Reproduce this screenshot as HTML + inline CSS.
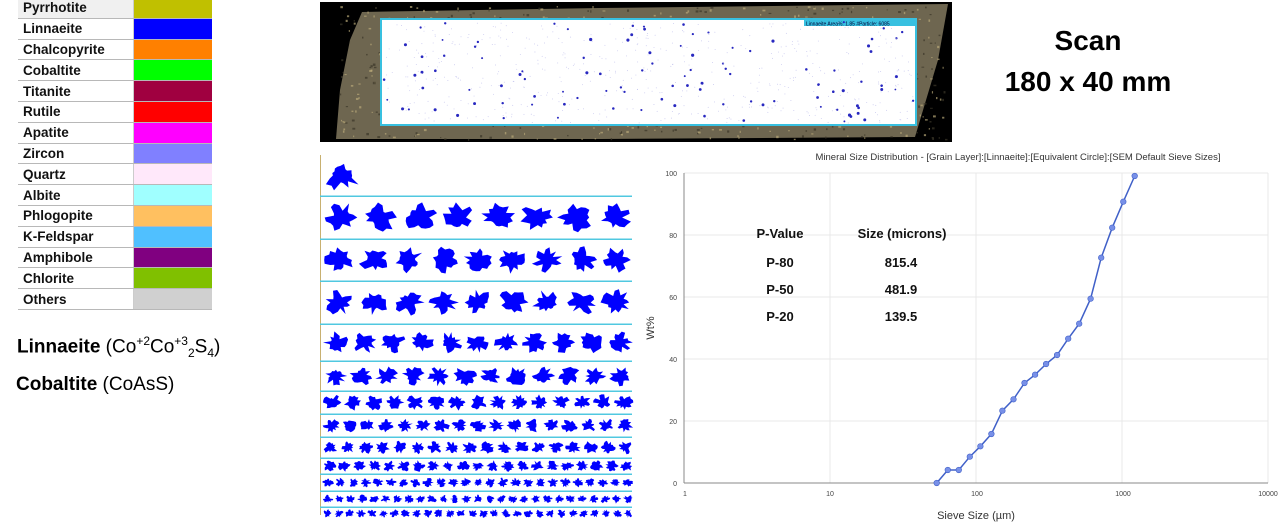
<!DOCTYPE html>
<html><head><meta charset="utf-8"><style>
body{margin:0;width:1280px;height:528px;background:#fff;overflow:hidden;position:relative;font-family:"Liberation Sans",Arial,sans-serif}
.leg{position:absolute;left:18px;top:-2px;border-collapse:collapse}
.leg td{height:19.8px;border-bottom:1px solid #b8b8b8;padding:0;font-weight:bold;font-size:13.5px;color:#111}
.leg td.n{width:110px;padding-left:5px;background:#fff}
.leg td.c{width:78px;border-left:1px solid #ccc}
.f{position:absolute;left:17px;font-size:19px;color:#000}
.f b{font-weight:bold}
.sc{position:absolute;left:990px;width:196px;text-align:center;font-weight:bold;font-size:28px;color:#000}
</style></head><body>
<table class="leg">
<tr><td class="n" style="background:#f0f0f0">Pyrrhotite</td><td class="c" style="background:#c0c000"></td></tr>
<tr><td class="n">Linnaeite</td><td class="c" style="background:#0000ff"></td></tr>
<tr><td class="n">Chalcopyrite</td><td class="c" style="background:#ff8000"></td></tr>
<tr><td class="n">Cobaltite</td><td class="c" style="background:#00ff00"></td></tr>
<tr><td class="n">Titanite</td><td class="c" style="background:#a00040"></td></tr>
<tr><td class="n">Rutile</td><td class="c" style="background:#ff0000"></td></tr>
<tr><td class="n">Apatite</td><td class="c" style="background:#ff00ff"></td></tr>
<tr><td class="n">Zircon</td><td class="c" style="background:#8080ff"></td></tr>
<tr><td class="n">Quartz</td><td class="c" style="background:#ffe8fa"></td></tr>
<tr><td class="n">Albite</td><td class="c" style="background:#a0ffff"></td></tr>
<tr><td class="n">Phlogopite</td><td class="c" style="background:#ffc060"></td></tr>
<tr><td class="n">K-Feldspar</td><td class="c" style="background:#50c0ff"></td></tr>
<tr><td class="n">Amphibole</td><td class="c" style="background:#800080"></td></tr>
<tr><td class="n">Chlorite</td><td class="c" style="background:#80c000"></td></tr>
<tr><td class="n">Others</td><td class="c" style="background:#d0d0d0"></td></tr>
</table>
<div class="f" style="top:334px"><b>Linnaeite</b> (Co<sup style="font-size:12px">+2</sup>Co<sup style="font-size:12px">+3</sup><sub style="font-size:12px">2</sub>S<sub style="font-size:12px">4</sub>)</div>
<div class="f" style="top:374px;left:16px"><b>Cobaltite</b> (CoAsS)</div>
<div class="sc" style="top:25px">Scan</div>
<div class="sc" style="top:66px">180 x 40 mm</div>

<svg style="position:absolute;left:0;top:0" width="1280" height="528" id="sv">
<rect x="320" y="2" width="632" height="140" fill="#000"/>
<polygon points="362,12 600,8 948,4 938,60 915,137 600,139 336,139 340,90 350,40" fill="#6e6650"/>
<g id="rock"></g>
<rect x="381" y="19" width="535" height="106" fill="#fff" stroke="#38c0e0" stroke-width="2"/>
<rect x="804" y="20" width="111" height="6" fill="#38c0e0"/>
<text x="806" y="25.5" font-size="5" fill="#003">Linnaeite  Area%: 1.85  #Particle: 6085</text>
<g id="dots"></g>
<g id="grains"></g>
<g stroke="#e8e8e8" stroke-width="1">
<line x1="684" y1="173" x2="1268" y2="173"/><line x1="684" y1="235" x2="1268" y2="235"/><line x1="684" y1="297" x2="1268" y2="297"/><line x1="684" y1="359" x2="1268" y2="359"/><line x1="684" y1="421" x2="1268" y2="421"/>
<line x1="830" y1="173" x2="830" y2="483"/><line x1="976" y1="173" x2="976" y2="483"/><line x1="1122" y1="173" x2="1122" y2="483"/><line x1="1268" y1="173" x2="1268" y2="483"/>
</g>
<g stroke="#888" stroke-width="1"><line x1="684" y1="173" x2="684" y2="483"/><line x1="684" y1="483" x2="1268" y2="483"/></g>
<g font-size="7" fill="#444" text-anchor="end"><text x="677" y="176">100</text><text x="677" y="238">80</text><text x="677" y="300">60</text><text x="677" y="362">40</text><text x="677" y="424">20</text><text x="677" y="486">0</text></g>
<g font-size="7" fill="#444" text-anchor="middle"><text x="685" y="496">1</text><text x="830" y="496">10</text><text x="977" y="496">100</text><text x="1123" y="496">1000</text><text x="1268" y="496">10000</text></g>
<text x="976" y="519" font-size="11" fill="#333" text-anchor="middle">Sieve Size (µm)</text>
<text x="654" y="328" font-size="11" fill="#333" text-anchor="middle" transform="rotate(-90 654 328)">Wt%</text>
<text x="1018" y="160" font-size="9.5" fill="#333" text-anchor="middle">Mineral Size Distribution - [Grain Layer]:[Linnaeite]:[Equivalent Circle]:[SEM Default Sieve Sizes]</text>
<g font-size="13" font-weight="bold" fill="#111" text-anchor="middle">
<text x="780" y="238">P-Value</text><text x="902" y="238">Size (microns)</text>
<text x="780" y="267">P-80</text><text x="901" y="267">815.4</text>
<text x="780" y="294">P-50</text><text x="901" y="294">481.9</text>
<text x="780" y="321">P-20</text><text x="901" y="321">139.5</text></g>
<polyline id="pl" fill="none" stroke="#4060c8" stroke-width="1.5"/>
<g id="pts"></g>
</svg>
<script>
var s=1;function r(){s=(s*16807)%2147483647;return s/2147483647}
var NS="http://www.w3.org/2000/svg";
function el(t,a,p){var e=document.createElementNS(NS,t);for(var k in a)e.setAttribute(k,a[k]);p.appendChild(e);return e}
var rk=document.getElementById('rock');
for(var i=0;i<900;i++){var x=340+r()*605,y=6+r()*133;el('rect',{x:x,y:y,width:1+r()*2,height:1+r()*1.5,fill:r()<0.5?'#b8a878':'#3a3628',opacity:0.7},rk)}
var d=document.getElementById('dots');
for(var i=0;i<600;i++){var big=r()<0.18;el('circle',{cx:384+r()*530,cy:22+r()*101,r:big?0.9+r()*0.7:0.45,fill:big?'#2828c0':'#c0c0ec'},d)}
var P=[[936.7,483],[947.8,470],[958.8,470],[969.8,456.7],[980.4,446.3],[991.4,434],[1002.4,410.7],[1013.5,399.3],[1024.5,383],[1035.1,374.7],[1046.1,364],[1057.1,355],[1068.2,338.7],[1079.2,323.7],[1090.6,298.7],[1101.2,257.7],[1112.2,227.7],[1123.3,201.7],[1134.7,176]];
document.getElementById('pl').setAttribute('points',P.map(function(p){return p.join(',')}).join(' '));
var g=document.getElementById('pts');P.forEach(function(p){el('circle',{cx:p[0],cy:p[1],r:2.8,fill:'#7890e8',stroke:'#4060c8','stroke-width':0.6},g)});
var G=document.getElementById('grains');
var lines=[155,196,239,281,324,361,391,414,437,458,474,491,507,520];
var counts=[1,8,9,9,11,12,15,17,18,21,25,27,28];
el('rect',{x:320,y:155,width:1,height:360,fill:'#c8b070'},G);
for(var k=0;k<13;k++){var y0=lines[k],y1=lines[k+1],h=y1-y0,n=counts[k],w=312/n;
 for(var j=0;j<n;j++){var cx=322+w*(j+0.5),cy=(y0+y1)/2,R=Math.min(w,h)*0.45;if(k==0){cx=342;R=19;}
  var pts=[],m=22;for(var q=0;q<m;q++){var a=q/m*6.283,rr=R*(0.4+r()*0.65);pts.push((cx+Math.cos(a)*rr).toFixed(1)+','+(cy+Math.sin(a)*rr*0.85).toFixed(1))}
  el('polygon',{points:pts.join(' '),fill:'#0000ff'},G)}
 if(k<12)el('rect',{x:320,y:y1-0.5,width:312,height:1.5,fill:'#50c8e0'},G)}
</script>
</body></html>
